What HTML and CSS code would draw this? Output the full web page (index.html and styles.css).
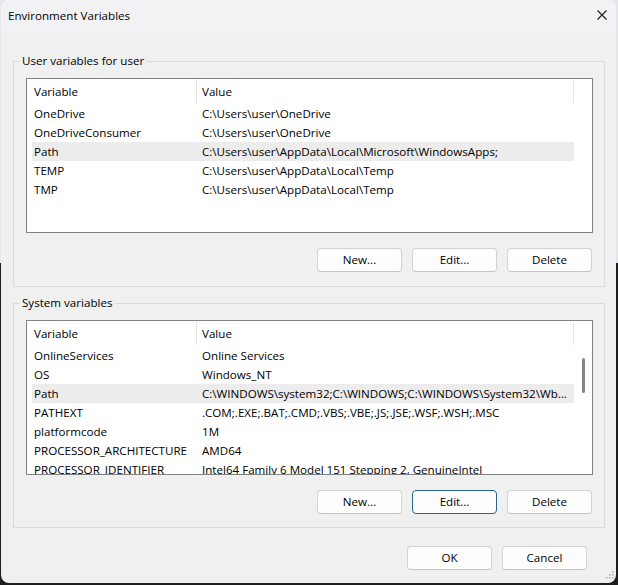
FILE: index.html
```html
<!DOCTYPE html>
<html lang="en">
<head>
<meta charset="utf-8">
<title>Environment Variables</title>
<link rel="stylesheet" href="styles.css">
</head>
<body>
<div class="window">
  <div class="titlebar">
    <span class="title">Environment Variables</span>
    <svg class="close" width="10" height="10" viewBox="0 0 10 10"><path d="M0.5 0.5 L9.5 9.5 M9.5 0.5 L0.5 9.5" stroke="#1a1a1a" stroke-width="1.1" fill="none"/></svg>
  </div>
  <div class="content">
    <fieldset class="group">
      <legend>User variables for user</legend>
      <div class="list">
        <div class="list-head"><div class="head-var">Variable</div><div class="head-val">Value</div></div>
        <div class="rows">
          <div class="row"><span class="c1">OneDrive</span><span class="c2">C:\Users\user\OneDrive</span></div>
          <div class="row"><span class="c1">OneDriveConsumer</span><span class="c2">C:\Users\user\OneDrive</span></div>
          <div class="row sel"><span class="c1">Path</span><span class="c2">C:\Users\user\AppData\Local\Microsoft\WindowsApps;</span></div>
          <div class="row"><span class="c1">TEMP</span><span class="c2">C:\Users\user\AppData\Local\Temp</span></div>
          <div class="row"><span class="c1">TMP</span><span class="c2">C:\Users\user\AppData\Local\Temp</span></div>
        </div>
      </div>
      <div class="btns">
        <button class="btn">New...</button>
        <button class="btn">Edit...</button>
        <button class="btn">Delete</button>
      </div>
    </fieldset>
    <fieldset class="group system">
      <legend>System variables</legend>
      <div class="list">
        <div class="list-head"><div class="head-var">Variable</div><div class="head-val">Value</div></div>
        <div class="rows">
          <div class="row"><span class="c1">OnlineServices</span><span class="c2">Online Services</span></div>
          <div class="row"><span class="c1">OS</span><span class="c2">Windows_NT</span></div>
          <div class="row sel"><span class="c1">Path</span><span class="c2">C:\WINDOWS\system32;C:\WINDOWS;C:\WINDOWS\System32\Wb...</span></div>
          <div class="row"><span class="c1">PATHEXT</span><span class="c2">.COM;.EXE;.BAT;.CMD;.VBS;.VBE;.JS;.JSE;.WSF;.WSH;.MSC</span></div>
          <div class="row"><span class="c1">platformcode</span><span class="c2">1M</span></div>
          <div class="row"><span class="c1">PROCESSOR_ARCHITECTURE</span><span class="c2">AMD64</span></div>
          <div class="row"><span class="c1">PROCESSOR_IDENTIFIER</span><span class="c2">Intel64 Family 6 Model 151 Stepping 2, GenuineIntel</span></div>
        </div>
        <div class="scroll-thumb"></div>
      </div>
      <div class="btns">
        <button class="btn">New...</button>
        <button class="btn default">Edit...</button>
        <button class="btn">Delete</button>
      </div>
    </fieldset>
    <div class="dialog-btns">
      <button class="btn">OK</button>
      <button class="btn">Cancel</button>
    </div>
  </div>
  <svg class="grip" width="10" height="10" viewBox="0 0 10 10">
    <rect x="8" y="0" width="1.5" height="1.5" fill="#a8a8a8"/>
    <rect x="5" y="3" width="1.5" height="1.5" fill="#a8a8a8"/>
    <rect x="8" y="3" width="1.5" height="1.5" fill="#a8a8a8"/>
    <rect x="2" y="6" width="1.5" height="1.5" fill="#a8a8a8"/>
    <rect x="5" y="6" width="1.5" height="1.5" fill="#a8a8a8"/>
    <rect x="8" y="6" width="1.5" height="1.5" fill="#a8a8a8"/>
  </svg>
</div>
</body>
</html>
```
FILE: styles.css
```css
* { box-sizing: border-box; }
html, body { margin: 0; padding: 0; }
body {
  width: 618px;
  height: 585px;
  overflow: hidden;
  background: linear-gradient(to bottom, #e6e6ea 0, #e6e6ea 45%, #1e1e1e 45%, #1e1e1e 100%);
  font-family: "Segoe UI", "Open Sans", sans-serif;
  font-size: 11.6px;
  line-height: 16px;
  color: #000;
}
.window {
  position: relative;
  margin-left: 1px;
  width: 615px;
  height: 583px;
  background: #f0f0f0;
  border-radius: 8px;
  overflow: hidden;
}
.titlebar {
  height: 31px;
  display: flex;
  align-items: center;
  justify-content: space-between;
  padding: 0 9px 0 7px;
  background: #f2f2f4;
}
.close { display: block; margin-top: -1px; }
.content { padding: 22px 11px 0 12px; }
.group {
  margin: 0;
  min-width: 0;
  border: 1px solid #dadada;
  padding: 9px 11px 14px 12px;
}
.group legend {
  padding: 0 2px;
  margin-left: -6px;
  line-height: 16px;
}
.group.system { margin-top: 8px; padding-bottom: 13px; }
.list {
  position: relative;
  height: 155px;
  border: 1px solid #828282;
  background: #fff;
  overflow: hidden;
}
.list-head { height: 25px; display: flex; }
.head-var, .head-val {
  display: flex;
  align-items: center;
  height: 23px;
  margin-top: 1px;
  border-right: 1px solid #e5e5e5;
}
.head-var { width: 170px; padding-left: 7px; }
.head-val { width: 377px; padding-left: 5px; }
.rows { padding: 0 18px 0 5px; }
.row {
  display: grid;
  grid-template-columns: 164px 1fr;
  height: 19px;
  line-height: 19px;
  white-space: nowrap;
}
.row .c1 { padding-left: 2px; overflow: hidden; }
.row .c2 { padding-left: 6px; overflow: hidden; }
.row.sel { background: #ececec; }
.scroll-thumb {
  position: absolute;
  left: 555px;
  top: 37px;
  width: 3px;
  height: 35px;
  border-radius: 2px;
  background: #858585;
}
.btns {
  display: flex;
  justify-content: flex-end;
  gap: 10px;
  margin-top: 15px;
  padding-right: 1px;
}
.btn {
  width: 85px;
  height: 24px;
  padding: 0;
  display: flex;
  align-items: center;
  justify-content: center;
  border: 1px solid #d3d3d3;
  border-bottom-color: #c4c4c4;
  border-radius: 4px;
  background: #fdfdfd;
  font: inherit;
  color: #000;
}
.btn.default { border-color: #2d648d; }
.dialog-btns {
  display: flex;
  justify-content: flex-end;
  gap: 10px;
  margin-top: 18px;
  padding-right: 18px;
}
.grip {
  position: absolute;
  right: 2px;
  bottom: 2px;
}
```
